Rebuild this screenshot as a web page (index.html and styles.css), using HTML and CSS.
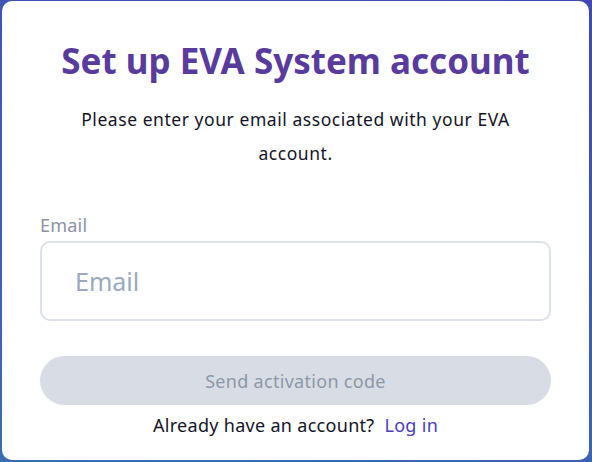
FILE: index.html
```html
<!DOCTYPE html>
<html lang="en">
<head>
<meta charset="utf-8">
<title>Set up EVA System account</title>
<link rel="stylesheet" href="styles.css">
</head>
<body>
<main class="card">
  <h1 class="title">Set up EVA System account</h1>
  <p class="lead">Please enter your email associated with your EVA account.</p>
  <form class="form">
    <label class="label" for="email">Email</label>
    <input class="input" id="email" type="email" placeholder="Email">
    <button class="btn" type="button" disabled>Send activation code</button>
  </form>
  <p class="alt">Already have an account?&nbsp; <a class="link" href="#">Log in</a></p>
</main>
</body>
</html>
```
FILE: styles.css
```css
* { box-sizing: border-box; }
html, body { height: 100%; }
body {
  margin: 0;
  padding: 1px 3px 2px 2px;
  background: linear-gradient(200deg, #4148b4 0%, #3d5cb2 50%, #3a6db2 100%);
  font-family: "Noto Sans", "Open Sans", sans-serif;
  color: #141428;
}
.card {
  height: 100%;
  background: #fff;
  border-radius: 10px;
  padding: 39px 38px 0;
  display: flex;
  flex-direction: column;
}
.title {
  margin: 0;
  text-align: center;
  font-size: 35px;
  line-height: 42px;
  font-weight: 700;
  color: #583b9c;
}
.lead {
  margin: 20px 16px 0;
  text-align: center;
  font-size: 17.5px;
  letter-spacing: 0.55px;
  line-height: 34px;
}
.form {
  margin-top: 44px;
  display: flex;
  flex-direction: column;
}
.label {
  font-size: 18px;
  letter-spacing: 0.2px;
  line-height: 22px;
  color: #8b93a3;
  margin-bottom: 5px;
}
.input {
  height: 80px;
  border: 2px solid #dde1ea;
  border-radius: 10px;
  padding: 0 33px;
  font-family: inherit;
  font-size: 25px;
  color: #333;
  outline: none;
}
.input::placeholder { color: #9aa9bf; }
.btn {
  margin-top: 35px;
  height: 49px;
  border: 0;
  border-radius: 25px;
  background: #d8dde5;
  color: #8e97a6;
  font-family: inherit;
  font-size: 18px;
  letter-spacing: 0.3px;
}
.alt {
  margin: 8px 0 0;
  text-align: center;
  font-size: 18px;
  letter-spacing: 0.3px;
  line-height: 24px;
}
.link {
  color: #4b3cbd;
  text-decoration: none;
}
```
